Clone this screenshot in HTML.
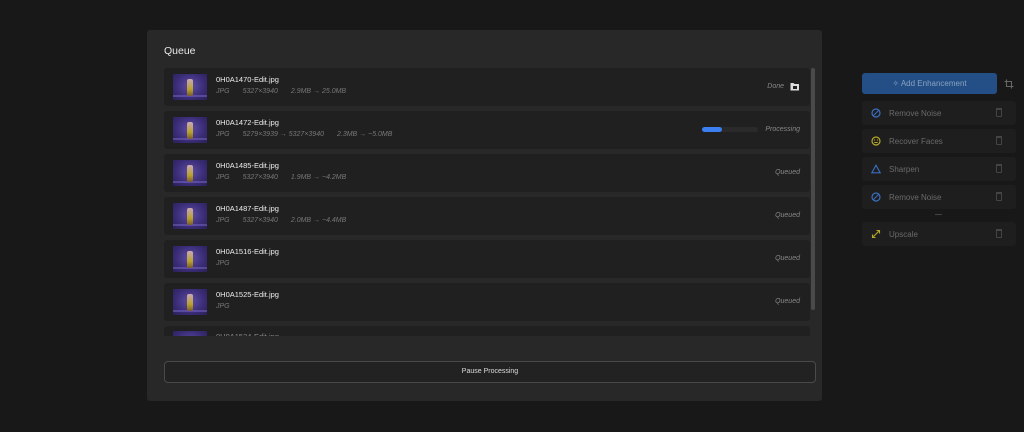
<!DOCTYPE html>
<html><head><meta charset="utf-8"><style>
*{box-sizing:border-box;margin:0;padding:0}
body{width:1024px;height:432px;background:#181818;font-family:"Liberation Sans",sans-serif;position:relative;overflow:hidden;color:#ddd}
.modal{position:absolute;left:147px;top:30px;width:675px;height:371px;background:#282828;border-radius:3px}
.title{position:absolute;left:17px;top:15px;font-size:10.5px;color:#e8e8e8}
.list{position:absolute;left:17px;top:38px;width:646px;height:268px;overflow:hidden}
.row{position:absolute;left:0;width:646px;height:38px;background:#202020;border-radius:3px}
.th{position:absolute;left:9px;top:6px;width:34px;height:26px;background:radial-gradient(ellipse at 50% 45%,#5e4ea4,#3a2c76 60%,#2a2058);}
.th::after{content:"";position:absolute;left:14px;top:5px;width:6px;height:17px;background:linear-gradient(#c9a8b8,#b9a32a 60%,#7a5a30);border-radius:2px}
.th::before{content:"";position:absolute;left:0;right:0;bottom:3px;height:2px;background:#7a6ac8;opacity:.5}
.name{position:absolute;left:52px;top:7px;font-size:7.5px;color:#eee}
.meta{position:absolute;left:52px;top:20px;font-size:7px;color:#777;font-style:italic}
.meta span{margin-right:13px}
.st{position:absolute;right:10px;top:15px;font-size:7px;color:#888;font-style:italic}
.scroll{position:absolute;left:664px;top:38px;width:4px;height:242px;background:#4a4a4a;border-radius:2px}
.btn{position:absolute;left:17px;top:331px;width:652px;height:22px;border:1px solid #4a4a4a;border-radius:4px;background:#222;font-size:7px;color:#ddd;text-align:center;line-height:20px}
.add{position:absolute;left:862px;top:73px;width:135px;height:21px;background:#234f86;border-radius:3px;color:#8aa2c0;font-size:8px;text-align:center;line-height:21px}
.it{position:absolute;left:862px;width:154px;height:24px;background:#1e1e1e;border-radius:3px;font-size:8px;color:#6a6a6a}
.it .ic{position:absolute;left:9px;top:7px;width:10px;height:10px}
.it .l{position:absolute;left:27px;top:8px}
.it .tr{position:absolute;left:134px;top:7px;width:6px;height:9px;border:1px solid #444;border-top-width:2px;border-radius:0 0 1px 1px}
</style></head><body>
<div class="modal">
<div class="title">Queue</div>
<div class="list">
<div class="row" style="top:0"><div class="th"></div><div class="name">0H0A1470-Edit.jpg</div><div class="meta"><span>JPG</span><span>5327×3940</span><span>2.9MB → 25.0MB</span></div><div class="st" style="right:26px">Done</div>
<svg style="position:absolute;right:10px;top:14px" width="10" height="9" viewBox="0 0 10 9"><path d="M0.5 1h3l1 1h4.5v6.5h-8.5z" fill="#ddd"/><rect x="3" y="4" width="4" height="3" fill="#202020"/></svg></div>
<div class="row" style="top:43px"><div class="th"></div><div class="name">0H0A1472-Edit.jpg</div><div class="meta"><span>JPG</span><span>5279×3939 → 5327×3940</span><span>2.3MB → ~5.0MB</span></div>
<div style="position:absolute;left:538px;top:16px;width:56px;height:5px;background:#2a2a2a;border-radius:3px"><div style="width:20px;height:5px;background:#3b7ff0;border-radius:3px"></div></div>
<div class="st">Processing</div></div>
<div class="row" style="top:86px"><div class="th"></div><div class="name">0H0A1485-Edit.jpg</div><div class="meta"><span>JPG</span><span>5327×3940</span><span>1.9MB → ~4.2MB</span></div><div class="st">Queued</div></div>
<div class="row" style="top:129px"><div class="th"></div><div class="name">0H0A1487-Edit.jpg</div><div class="meta"><span>JPG</span><span>5327×3940</span><span>2.0MB → ~4.4MB</span></div><div class="st">Queued</div></div>
<div class="row" style="top:172px"><div class="th"></div><div class="name">0H0A1516-Edit.jpg</div><div class="meta"><span>JPG</span></div><div class="st">Queued</div></div>
<div class="row" style="top:215px"><div class="th"></div><div class="name">0H0A1525-Edit.jpg</div><div class="meta"><span>JPG</span></div><div class="st">Queued</div></div>
<div class="row" style="top:258px"><div class="th" style="top:5px"></div><div class="name" style="top:6px;color:#888">0H0A1534-Edit.jpg</div></div>
</div>
<div class="scroll"></div>
<div class="btn">Pause Processing</div>
</div>
<div class="add">✧ Add Enhancement</div>
<svg style="position:absolute;left:1004px;top:79px" width="10" height="10" viewBox="0 0 10 10"><path d="M2.5 0.5v7h7M0.5 2.5h7v7" fill="none" stroke="#666" stroke-width="1.1"/></svg>
<div class="it" style="top:101px"><svg class="ic" viewBox="0 0 10 10"><circle cx="5" cy="5" r="4" fill="none" stroke="#3a6fc0" stroke-width="1.2"/><path d="M2.5 7.5l5-5" stroke="#3a6fc0"/></svg><div class="l">Remove Noise</div><div class="tr"></div></div>
<div class="it" style="top:129px"><svg class="ic" viewBox="0 0 10 10"><circle cx="5" cy="5" r="4" fill="none" stroke="#b8a82a" stroke-width="1.2"/><circle cx="3.5" cy="4" r=".6" fill="#b8a82a"/><circle cx="6.5" cy="4" r=".6" fill="#b8a82a"/><path d="M3.3 6.5h3.4" stroke="#b8a82a"/></svg><div class="l">Recover Faces</div><div class="tr"></div></div>
<div class="it" style="top:157px"><svg class="ic" viewBox="0 0 10 10"><path d="M5 1.2L9.2 8.8H0.8z" fill="none" stroke="#3a6fc0" stroke-width="1.1"/></svg><div class="l">Sharpen</div><div class="tr"></div></div>
<div class="it" style="top:185px"><svg class="ic" viewBox="0 0 10 10"><circle cx="5" cy="5" r="4" fill="none" stroke="#3a6fc0" stroke-width="1.2"/><path d="M2.5 7.5l5-5" stroke="#3a6fc0"/></svg><div class="l">Remove Noise</div><div class="tr"></div></div>
<div style="position:absolute;left:935px;top:214px;width:7px;height:1px;background:#444"></div>
<div class="it" style="top:222px"><svg class="ic" viewBox="0 0 10 10"><path d="M1.5 8.5l7-7M5.5 1.5h3v3M1.5 5.5v3h3" fill="none" stroke="#b8a82a" stroke-width="1.1"/></svg><div class="l">Upscale</div><div class="tr"></div></div>
</body></html>
